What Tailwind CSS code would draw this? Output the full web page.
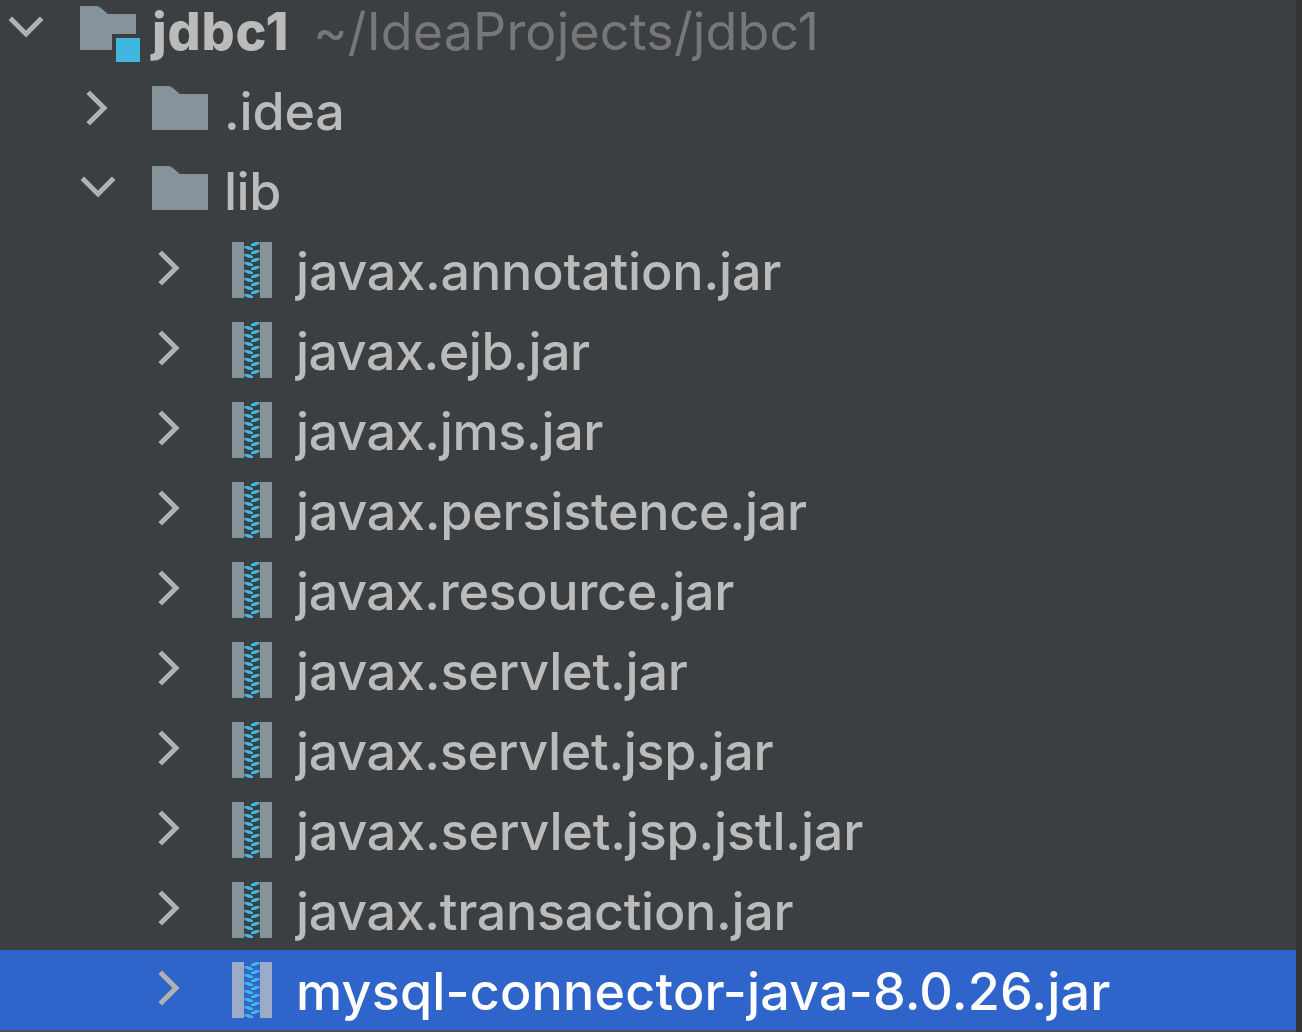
<!DOCTYPE html>
<html lang="en">
<head>
    <meta charset="UTF-8">
    <meta name="viewport" content="width=device-width, initial-scale=1.0">
    <title>jdbc1</title>
    <script src="https://cdn.jsdelivr.net/npm/@tailwindcss/browser@4"></script>
</head>
<body class="bg-[#3c3f41]">
    <!-- Icon sprites -->
    <svg class="hidden">
        <symbol id="right" viewBox="0 0 52 80">
            <path d="M16.2 22.3L32 38L16.2 53.7" fill="none" stroke="currentColor" stroke-width="5"/>
        </symbol>
        <symbol id="down" viewBox="0 0 52 80">
            <path d="M10.3 28.3L26 44L41.7 28.3" fill="none" stroke="currentColor" stroke-width="5"/>
        </symbol>
        <symbol id="folder" viewBox="0 0 64 64">
            <path d="M4 8H19.5C22.5 8 24 9 26 11L32 16H60V52H4Z" fill="currentColor"/>
        </symbol>
        <symbol id="module" viewBox="0 0 64 64">
            <path d="M4 8H19.5C22.5 8 24 9 26 11L32 16H60V36H36V52H4Z" fill="currentColor"/>
            <path d="M40 40H64V64H40Z" fill="#40b6e0"/>
        </symbol>
        <symbol id="jar" viewBox="0 0 64 64">
            <path d="M12 4H24V60H12ZM40 4H52V60H40Z" fill="currentColor"/>
            <path fill="#40b6e0" d="M24.5 8h4l4.5 2v2h-4l-4.500-2zM24.5 16h4l4.5 2v2h-4l-4.500-2zM24.5 24h4l4.5 2v2h-4l-4.500-2zM24.5 32h4l4.5 2v2h-4l-4.500-2zM24.5 40h4l4.5 2v2h-4l-4.500-2zM24.5 48h4l4.5 2v2h-4l-4.500-2zM24.5 56h4l4.5 2v2h-4l-4.500-2zM39.500 4h-4l-4.500 2v2h4l4.500-2zM39.500 12h-4l-4.500 2v2h4l4.500-2zM39.500 20h-4l-4.500 2v2h4l4.500-2zM39.500 28h-4l-4.500 2v2h4l4.500-2zM39.500 36h-4l-4.500 2v2h4l4.500-2zM39.500 44h-4l-4.500 2v2h4l4.500-2zM39.500 52h-4l-4.500 2v2h4l4.500-2z"/>
        </symbol>
    </svg>

    <div class="flex h-screen overflow-hidden font-['Inter',sans-serif] font-medium text-[52px] leading-[84px] whitespace-nowrap text-[#bbbbbb]">
        <!-- Project tree -->
        <div class="flex-1 -mt-2.5">
            <div class="flex h-20">
                <svg class="w-13 h-20 mr-6 text-[#afb1b3]"><use href="#down"/></svg>
                <svg class="size-16 mt-2 mr-3 text-[#87939a]"><use href="#module"/></svg>
                <span class="font-extrabold tracking-[0.8px]">jdbc1</span>
                <span class="ml-6 font-normal text-[#777777] tracking-[0.15px]">~/IdeaProjects/jdbc1</span>
            </div>
            <div class="flex h-20 pl-18">
                <svg class="w-13 h-20 mr-6 text-[#afb1b3]"><use href="#right"/></svg>
                <svg class="size-16 mt-2 mr-3 text-[#87939a]"><use href="#folder"/></svg>
                <span class="tracking-[-0.2px]">.idea</span>
            </div>
            <div class="flex h-20 pl-18">
                <svg class="w-13 h-20 mr-6 text-[#afb1b3]"><use href="#down"/></svg>
                <svg class="size-16 mt-2 mr-3 text-[#87939a]"><use href="#folder"/></svg>
                <span class="tracking-[-0.5px]">lib</span>
            </div>
            <div class="flex h-20 pl-36">
                <svg class="w-13 h-20 mr-6 text-[#afb1b3]"><use href="#right"/></svg>
                <svg class="size-16 mt-2 mr-3 text-[#87939a]"><use href="#jar"/></svg>
                <span class="tracking-[-0.17px]">javax.annotation.jar</span>
            </div>
            <div class="flex h-20 pl-36">
                <svg class="w-13 h-20 mr-6 text-[#afb1b3]"><use href="#right"/></svg>
                <svg class="size-16 mt-2 mr-3 text-[#87939a]"><use href="#jar"/></svg>
                <span class="tracking-[-0.48px]">javax.ejb.jar</span>
            </div>
            <div class="flex h-20 pl-36">
                <svg class="w-13 h-20 mr-6 text-[#afb1b3]"><use href="#right"/></svg>
                <svg class="size-16 mt-2 mr-3 text-[#87939a]"><use href="#jar"/></svg>
                <span class="tracking-[-0.33px]">javax.jms.jar</span>
            </div>
            <div class="flex h-20 pl-36">
                <svg class="w-13 h-20 mr-6 text-[#afb1b3]"><use href="#right"/></svg>
                <svg class="size-16 mt-2 mr-3 text-[#87939a]"><use href="#jar"/></svg>
                <span class="tracking-[-0.22px]">javax.persistence.jar</span>
            </div>
            <div class="flex h-20 pl-36">
                <svg class="w-13 h-20 mr-6 text-[#afb1b3]"><use href="#right"/></svg>
                <svg class="size-16 mt-2 mr-3 text-[#87939a]"><use href="#jar"/></svg>
                <span class="tracking-[-0.34px]">javax.resource.jar</span>
            </div>
            <div class="flex h-20 pl-36">
                <svg class="w-13 h-20 mr-6 text-[#afb1b3]"><use href="#right"/></svg>
                <svg class="size-16 mt-2 mr-3 text-[#87939a]"><use href="#jar"/></svg>
                <span class="tracking-[-0.2px]">javax.servlet.jar</span>
            </div>
            <div class="flex h-20 pl-36">
                <svg class="w-13 h-20 mr-6 text-[#afb1b3]"><use href="#right"/></svg>
                <svg class="size-16 mt-2 mr-3 text-[#87939a]"><use href="#jar"/></svg>
                <span class="tracking-[-0.32px]">javax.servlet.jsp.jar</span>
            </div>
            <div class="flex h-20 pl-36">
                <svg class="w-13 h-20 mr-6 text-[#afb1b3]"><use href="#right"/></svg>
                <svg class="size-16 mt-2 mr-3 text-[#87939a]"><use href="#jar"/></svg>
                <span class="tracking-[-0.18px]">javax.servlet.jsp.jstl.jar</span>
            </div>
            <div class="flex h-20 pl-36">
                <svg class="w-13 h-20 mr-6 text-[#afb1b3]"><use href="#right"/></svg>
                <svg class="size-16 mt-2 mr-3 text-[#87939a]"><use href="#jar"/></svg>
                <span class="tracking-[-0.3px]">javax.transaction.jar</span>
            </div>
            <!-- Selected row -->
            <div class="flex h-20 pl-36 bg-[#2f65ca] text-white">
                <svg class="w-13 h-20 mr-6 text-[#afb1b3]"><use href="#right"/></svg>
                <svg class="size-16 mt-2 mr-3 text-[#9aacc8]"><use href="#jar"/></svg>
                <span class="tracking-[0.2px]">mysql-connector-java-8.0.26.jar</span>
            </div>
            <div class="h-0.5 bg-[#4d4f51]"></div>
        </div>
        <!-- Panel edge -->
        <div class="w-1.5 bg-[#323334]"></div>
    </div>
</body>
</html>
